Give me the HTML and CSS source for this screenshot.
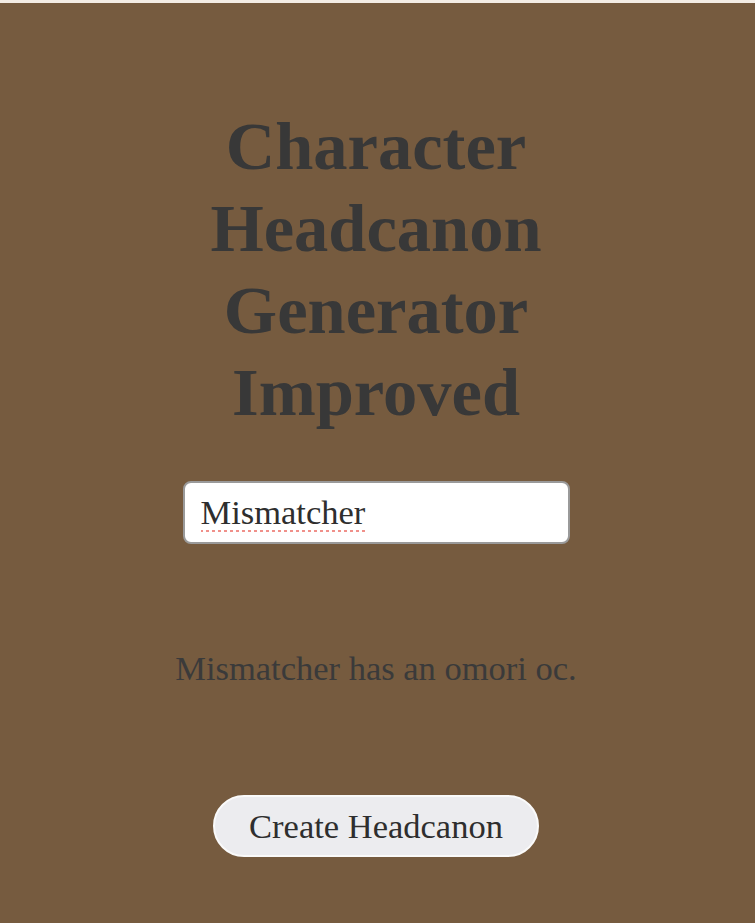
FILE: index.html
```html
<!DOCTYPE html>
<html>
<head>
<meta charset="utf-8">
<link rel="stylesheet" href="styles.css">
</head>
<body>
<main class="page">
  <h1 class="title">Character Headcanon Generator Improved</h1>
  <input class="name-input" type="text" value="Mismatcher" spellcheck="false">
  <p class="result">Mismatcher has an omori oc.</p>
  <button class="create-btn">Create Headcanon</button>
</main>
</body>
</html>
```
FILE: styles.css
```css
html, body {
  margin: 0;
  padding: 0;
}
body {
  background: #765b3f;
  border-top: 3px solid #f3ece4;
  min-height: 920px;
  font-family: "Liberation Serif", "Times New Roman", serif;
  color: #383838;
}
.page {
  display: flex;
  flex-direction: column;
  align-items: center;
  padding: 102px 3px 0 0;
}
.title {
  margin: 0;
  width: 380px;
  text-align: center;
  font-size: 68.5px;
  line-height: 82px;
  font-weight: bold;
  color: #383838;
}
.name-input {
  margin-top: 48px;
  width: 387px;
  height: 63px;
  box-sizing: border-box;
  border: 2px solid #9a9a9a;
  border-radius: 8px;
  background: #fff;
  padding: 0 16px;
  font-family: "Liberation Serif", serif;
  font-size: 34.5px;
  color: #2e2e2e;
  text-decoration: underline dotted #f0908a;
  text-underline-offset: 6px;
  text-decoration-thickness: 3px;
  outline: none;
}
.result {
  margin: 104px 0 0;
  font-size: 34.5px;
  line-height: 40px;
  color: #3a3a3a;
}
.create-btn {
  margin-top: 107px;
  width: 326px;
  height: 62px;
  box-sizing: border-box;
  border: 2px solid #fafafa;
  border-radius: 31px;
  background: #ececef;
  font-family: "Liberation Serif", serif;
  font-size: 34.5px;
  color: #2e2e2e;
}
```
